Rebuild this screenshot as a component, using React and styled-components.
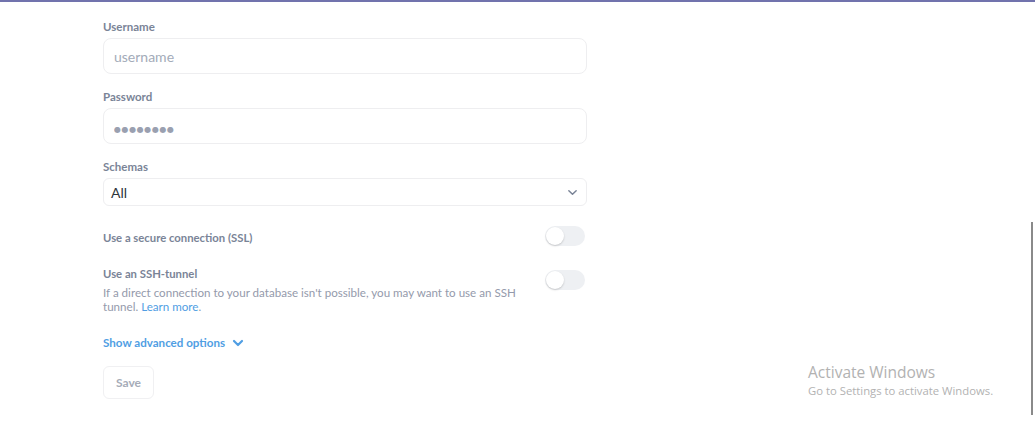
import React from 'react';
import styled, { createGlobalStyle } from 'styled-components';

const GlobalStyle = createGlobalStyle`
  html, body {
    margin: 0;
    padding: 0;
    background: #fff;
    font-family: Lato, "Noto Sans", sans-serif;
    overflow: hidden;
  }
`;

const Page = styled.div`
  position: relative;
  width: 1035px;
  height: 423px;
  border-top: 2px solid #7173ad;
  box-sizing: border-box;
`;

const Form = styled.form`
  width: 484px;
  margin-left: 103px;
  padding-top: 17px;
  display: flex;
  flex-direction: column;
`;

const Field = styled.div`
  display: flex;
  flex-direction: column;
  margin-bottom: ${(p) => p.$gap || 15}px;
`;

const Label = styled.label`
  font-size: 11.5px;
  font-weight: 700;
  line-height: 16px;
  color: #7a8497;
  margin-bottom: 3px;
`;

const Input = styled.input`
  box-sizing: border-box;
  height: 36px;
  width: 100%;
  border: 1px solid #eeeef0;
  border-radius: 8px;
  padding: 0 10px;
  font-family: Lato, sans-serif;
  font-size: 14px;
  color: #2e353b;
  outline: none;
  &::placeholder {
    color: #a3abb9;
  }
`;

const PasswordInput = styled(Input)`
  &::placeholder {
    font-family: "DejaVu Sans", sans-serif;
    font-size: 8px;
    letter-spacing: 0.6px;
    color: #9aa0b0;
  }
`;

const Select = styled.div`
  box-sizing: border-box;
  height: 28px;
  border: 1px solid #eeeef0;
  border-radius: 6px;
  padding: 0 8px 0 7px;
  display: flex;
  align-items: center;
  justify-content: space-between;
  font-size: 14px;
  color: #2e353b;
`;

const Row = styled.div`
  display: flex;
  justify-content: space-between;
  align-items: flex-start;
  margin-bottom: ${(p) => p.$gap || 0}px;
`;

const RowText = styled.div`
  display: flex;
  flex-direction: column;
  max-width: 425px;
`;

const RowTitle = styled.div`
  font-size: 11.3px;
  font-weight: 700;
  line-height: 16px;
  color: #7a8497;
  padding-top: ${(p) => p.$pad || 0}px;
`;

const Description = styled.div`
  font-size: 11.6px;
  line-height: 14px;
  color: #949aab;
  margin-top: 4px;
`;

const Link = styled.a`
  color: #509ee3;
  text-decoration: none;
`;

const Toggle = styled.div`
  position: relative;
  width: 40px;
  height: 20px;
  border-radius: 10px;
  background: #eef0f3;
  margin-right: 2px;
  margin-top: ${(p) => p.$top || 0}px;
  flex-shrink: 0;
  &::after {
    content: '';
    position: absolute;
    left: 1px;
    top: 1px;
    width: 18px;
    height: 18px;
    border-radius: 50%;
    background: #fff;
    box-shadow: 0 1px 2px rgba(0, 0, 0, 0.18);
  }
`;

const Advanced = styled.div`
  display: flex;
  align-items: center;
  gap: 7px;
  font-size: 11.6px;
  font-weight: 700;
  color: #509ee3;
  line-height: 16px;
  margin-top: 21px;
`;

const SaveButton = styled.button`
  margin-top: 15px;
  align-self: flex-start;
  width: 51px;
  height: 33px;
  border: 1px solid #f0f0f2;
  border-radius: 6px;
  background: #fff;
  font-family: Lato, sans-serif;
  font-size: 12px;
  font-weight: 700;
  color: #a6acb8;
`;

const Watermark = styled.div`
  position: absolute;
  left: 808px;
  top: 360px;
  font-family: "Open Sans", "Noto Sans", sans-serif;
  color: #b2b2b2;
`;

const WatermarkTitle = styled.div`
  font-size: 15.5px;
  line-height: 20px;
`;

const WatermarkSub = styled.div`
  font-size: 11.3px;
  line-height: 17px;
`;

const ScrollThumb = styled.div`
  position: absolute;
  left: 1031px;
  top: 220px;
  width: 2px;
  height: 193px;
  background: #8a8a8a;
`;

const Chevron = ({ size = 12, color = '#7a8497', width = 2 }) => (
  <svg width={size} height={size} viewBox="0 0 12 12" fill="none">
    <path d="M2 4l4 4 4-4" stroke={color} strokeWidth={width} strokeLinecap="round" strokeLinejoin="round" />
  </svg>
);

export default function App() {
  return (
    <>
      <GlobalStyle />
      <Page>
        <Form onSubmit={(e) => e.preventDefault()}>
          <Field>
            <Label>Username</Label>
            <Input placeholder="username" />
          </Field>
          <Field>
            <Label>Password</Label>
            <PasswordInput type="password" placeholder="●●●●●●●●" />
          </Field>
          <Field $gap={20}>
            <Label>Schemas</Label>
            <Select>
              All
              <Chevron size={11} width={1.6} />
            </Select>
          </Field>
          <Row $gap={20}>
            <RowTitle $pad={4}>Use a secure connection (SSL)</RowTitle>
            <Toggle />
          </Row>
          <Row>
            <RowText>
              <RowTitle>Use an SSH-tunnel</RowTitle>
              <Description>
                If a direct connection to your database isn't possible, you may want to use an SSH tunnel.{' '}
                <Link href="#">Learn more</Link>.
              </Description>
            </RowText>
            <Toggle $top={4} />
          </Row>
          <Advanced>
            Show advanced options
            <Chevron size={12} color="#509ee3" width={2.2} />
          </Advanced>
          <SaveButton type="button">Save</SaveButton>
        </Form>
        <Watermark>
          <WatermarkTitle>Activate Windows</WatermarkTitle>
          <WatermarkSub>Go to Settings to activate Windows.</WatermarkSub>
        </Watermark>
        <ScrollThumb />
      </Page>
    </>
  );
}
